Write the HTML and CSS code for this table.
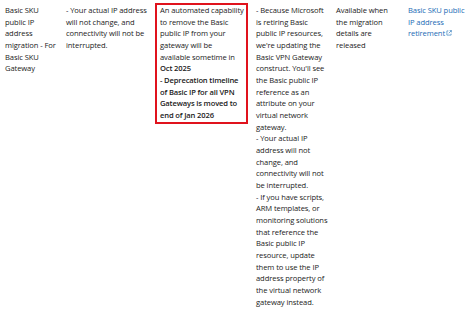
FILE: index.html
```html
<!DOCTYPE html>
<html>
<head>
<meta charset="utf-8">
<link rel="stylesheet" href="styles.css">
</head>
<body>
<div class="table">
  <div class="cell c1">Basic SKU<br>public IP<br>address<br>migration - For<br>Basic SKU<br>Gateway</div>
  <div class="cell c2">- Your actual IP address<br>will not change, and<br>connectivity will not be<br>interrupted.</div>
  <div class="cell c3">
    <div class="highlight">An automated capability<br>to remove the Basic<br>public IP from your<br>gateway will be<br>available sometime in<br><strong>Oct 2025</strong><br><strong>- Deprecation timeline<br>of Basic IP for all VPN<br>Gateways is moved to<br>end of Jan 2026</strong></div>
  </div>
  <div class="cell c4">- Because Microsoft<br>is retiring Basic<br>public IP resources,<br>we're updating the<br>Basic VPN Gateway<br>construct. You'll see<br>the Basic public IP<br>reference as an<br>attribute on your<br>virtual network<br>gateway.<br>- Your actual IP<br>address will not<br>change, and<br>connectivity will not<br>be interrupted.<br>- If you have scripts,<br>ARM templates, or<br>monitoring solutions<br>that reference the<br>Basic public IP<br>resource, update<br>them to use the IP<br>address property of<br>the virtual network<br>gateway instead.</div>
  <div class="cell c5">Available when<br>the migration<br>details are<br>released</div>
  <div class="cell c6"><a class="link" href="#">Basic SKU public<br>IP address<br>retirement<svg class="ext" viewBox="0 0 10 10" width="6" height="6"><path d="M4 1.5H1.5v7h7V6" fill="none" stroke="currentColor" stroke-width="1"/><path d="M6 1h3v3M9 1L4.5 5.5" fill="none" stroke="currentColor" stroke-width="1"/></svg></a></div>
</div>
</body>
</html>
```
FILE: styles.css
```css
html, body {
  margin: 0;
  padding: 0;
  background: #ffffff;
}
body {
  font-family: "Open Sans", "Noto Sans", sans-serif;
  font-size: 7.6px;
  line-height: 11.67px;
  letter-spacing: -0.1px;
  color: #1b1b1b;
}
.table {
  display: grid;
  grid-template-columns: 61px 90px 100px 80px 72px 71px;
  align-items: start;
}
.cell {
  padding: 5px 0 0 5px;
  white-space: nowrap;
}
.c3 {
  padding: 3px 0 0 4px;
}
.highlight {
  width: 85px;
  border: 2px solid #e0131d;
  padding: 0 1px 0 3px;
}
.link {
  color: #1a6bb5;
  text-decoration: none;
}
.ext {
  margin-left: 1px;
  vertical-align: 0;
}
strong {
  font-weight: 600;
  letter-spacing: -0.15px;
}
```
